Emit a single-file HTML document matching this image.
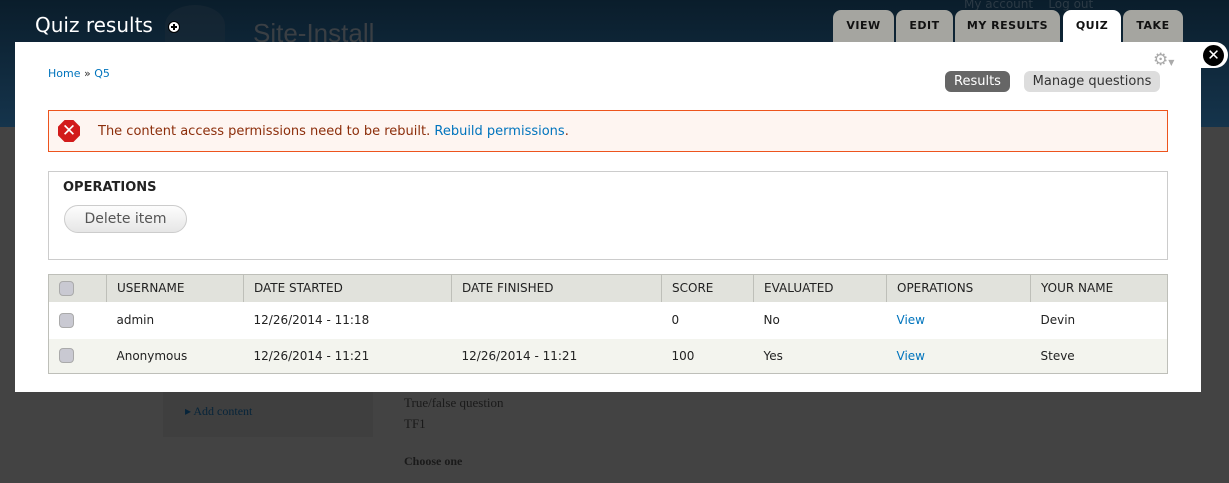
<!DOCTYPE html>
<html><head><meta charset="utf-8"><style>
*{box-sizing:border-box;margin:0;padding:0}
body{width:1229px;height:483px;overflow:hidden;position:relative;background:#434343;font-family:"DejaVu Sans","Liberation Sans",sans-serif;font-size:12px;color:#333}
#hdr{position:absolute;left:0;top:0;width:1229px;height:127px;background:linear-gradient(#0a1d2b,#15344c)}
#title{position:absolute;left:35px;top:13px;color:#fff;font-size:20px}
#plus{position:absolute;left:168px;top:21px;width:12px;height:12px;border-radius:50%;background:#fff;border:1px solid #000}
#plus:before{content:"";position:absolute;left:2px;top:4px;width:6px;height:2px;background:#000}
#plus:after{content:"";position:absolute;left:4px;top:2px;width:2px;height:6px;background:#000}
#site{position:absolute;left:253px;top:18px;color:#3a3f44;font-family:"Liberation Sans",sans-serif;font-size:26px}
#drop{position:absolute;left:165px;top:5px;width:60px;height:40px;border-radius:50% 50% 0 0;background:#1c2a35;opacity:.5}
#acct{position:absolute;left:964px;top:-3px;color:#2c3a45;font-size:12px}
.tab{position:absolute;top:10px;height:32px;background:#a5a5a0;border-radius:8px 8px 0 0;font-weight:bold;font-size:11px;color:#111;text-align:center;line-height:31px;letter-spacing:.5px}
#ov{position:absolute;left:15px;top:42px;width:1186px;height:350px;background:#fff}
#close{position:absolute;left:1201px;top:42px;width:27px;height:26px;background:#fff;border-radius:0 13px 13px 0}
#close div{position:absolute;left:2px;top:3px;width:21px;height:21px;border-radius:50%;background:#000;color:#fff;font-size:15px;font-weight:bold;text-align:center;line-height:21px}
a{color:#0074bd;text-decoration:none}
.bread{position:absolute;left:48px;top:67px;font-size:11px}
.btn1{position:absolute;left:945px;top:71px;width:65px;height:21px;background:#666;color:#fff;border-radius:6px;text-align:center;line-height:22px;font-size:13px}
.btn2{position:absolute;left:1024px;top:71px;width:136px;height:21px;background:#ddd;color:#333;border-radius:6px;text-align:center;line-height:22px;font-size:13px}
#msg{position:absolute;left:48px;top:110px;width:1120px;height:42px;background:#fef5f1;border:1px solid #ed541d;color:#8c2e0b;font-size:13px;line-height:41px;padding-left:49px}
#err{position:absolute;left:9px;top:9px;width:22px;height:22px;background:#d21b1b;clip-path:polygon(30% 0,70% 0,100% 30%,100% 70%,70% 100%,30% 100%,0 70%,0 30%);color:#fff;font-weight:bold;font-size:17px;text-align:center;line-height:22px}
#ops{position:absolute;left:48px;top:171px;width:1120px;height:89px;border:1px solid #ccc}
#ops h2{position:absolute;left:14px;top:8px;font-size:13px;font-weight:bold;color:#222}
#del{position:absolute;left:15px;top:33px;width:123px;height:28px;border:1px solid #ccc;border-radius:14px;background:linear-gradient(#fdfdfd,#e6e6e6);text-align:center;line-height:26px;font-size:14px;color:#555}
table{position:absolute;left:48px;top:274px;width:1120px;border-collapse:collapse;border:1px solid #bebfb9;font-size:12px}
th{background:#e1e2dc;font-weight:normal;text-align:left;height:27px;padding-left:10px;border-left:1px solid #bebfb9;color:#222}
td{height:37px;padding-left:10px;color:#222}
tr.e td{height:35px;background:#f3f4ee}
.cb{display:inline-block;width:15px;height:15px;border-radius:4px;background:#c9c9d2;border:1px solid #aaa;vertical-align:middle}
.bg{position:absolute;color:#1a1a1a;font-family:"Liberation Serif",serif;font-size:13px}
</style></head><body>
<div id="hdr"></div>
<div id="drop"></div>
<div id="title">Quiz results</div><div id="plus"></div>
<div id="site">Site-Install</div>
<div id="acct">My account &nbsp;&nbsp;&nbsp;Log out</div>
<div class="tab" style="left:833px;width:61px">VIEW</div>
<div class="tab" style="left:896px;width:57px">EDIT</div>
<div class="tab" style="left:955px;width:105px">MY RESULTS</div>
<div class="tab" style="left:1063px;width:58px;background:#fff">QUIZ</div>
<div class="tab" style="left:1123px;width:60px">TAKE</div>
<div style="position:absolute;left:163px;top:392px;width:210px;height:45px;background:#3f3f3f"></div>
<div class="bg" style="left:185px;top:404px;color:#06243a;font-size:12px">▸ Add content</div>
<div class="bg" style="left:404px;top:395px">True/false question</div>
<div class="bg" style="left:404px;top:416px">TF1</div>
<div class="bg" style="left:404px;top:454px;font-weight:bold;font-size:12px">Choose one</div>
<div id="ov"></div>
<div id="close"><div>✕</div></div>
<div style="position:absolute;left:1153px;top:50px;color:#aaa;font-size:17px;font-weight:bold">⚙<span style="font-size:8px">▼</span></div>
<div class="bread"><a>Home</a> » <a>Q5</a></div>
<div class="btn1">Results</div><div class="btn2">Manage questions</div>
<div id="msg"><div id="err">✕</div>The content access permissions need to be rebuilt. <a>Rebuild permissions</a>.</div>
<div id="ops"><h2>OPERATIONS</h2><div id="del">Delete item</div></div>
<table>
<tr><th style="width:58px;border-left:0"><span class="cb"></span></th><th style="width:137px">USERNAME</th><th style="width:208px">DATE STARTED</th><th style="width:210px">DATE FINISHED</th><th style="width:92px">SCORE</th><th style="width:133px">EVALUATED</th><th style="width:144px">OPERATIONS</th><th>YOUR NAME</th></tr>
<tr><td><span class="cb"></span></td><td>admin</td><td>12/26/2014 - 11:18</td><td></td><td>0</td><td>No</td><td><a>View</a></td><td>Devin</td></tr>
<tr class="e"><td><span class="cb"></span></td><td>Anonymous</td><td>12/26/2014 - 11:21</td><td>12/26/2014 - 11:21</td><td>100</td><td>Yes</td><td><a>View</a></td><td>Steve</td></tr>
</table>
</body></html>
